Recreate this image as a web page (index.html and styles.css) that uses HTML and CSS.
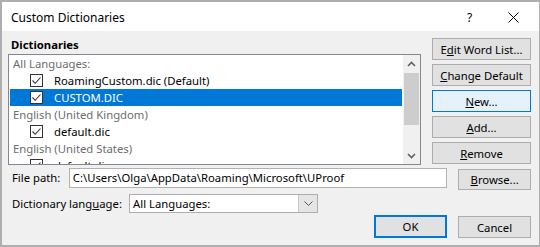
FILE: index.html
```html
<!DOCTYPE html>
<html lang="en">
<head>
    <meta charset="UTF-8">
    <title>Custom Dictionaries</title>
    <link rel="stylesheet" href="styles.css">
</head>
<body>
<div class="window">
    <div class="titlebar">
        <span class="title">Custom Dictionaries</span>
        <span class="help">?</span>
        <span class="close">
            <svg width="11" height="11" viewBox="0 0 11 11"><path d="M0.5 0.5 L10.5 10.5 M10.5 0.5 L0.5 10.5" stroke="#000" stroke-width="1" fill="none"/></svg>
        </span>
    </div>

    <div class="content">
        <div class="top">
            <div class="dicts">
                <div class="group-label">Dictionaries</div>
                <div class="listbox">
                    <div class="list">
                        <div class="row header">All Languages:</div>
                        <div class="row item">
                            <span class="check"><svg width="11" height="11" viewBox="0 0 11 11"><path d="M1.5 5.5 L4.2 8.3 L9.5 2.5" stroke="#333" stroke-width="1.1" fill="none"/></svg></span>
                            RoamingCustom.dic (Default)
                        </div>
                        <div class="row item selected">
                            <span class="check"><svg width="11" height="11" viewBox="0 0 11 11"><path d="M1.5 5.5 L4.2 8.3 L9.5 2.5" stroke="#333" stroke-width="1.1" fill="none"/></svg></span>
                            CUSTOM.DIC
                        </div>
                        <div class="row header">English (United Kingdom)</div>
                        <div class="row item">
                            <span class="check"><svg width="11" height="11" viewBox="0 0 11 11"><path d="M1.5 5.5 L4.2 8.3 L9.5 2.5" stroke="#333" stroke-width="1.1" fill="none"/></svg></span>
                            default.dic
                        </div>
                        <div class="row header">English (United States)</div>
                        <div class="row item">
                            <span class="check"><svg width="11" height="11" viewBox="0 0 11 11"><path d="M1.5 5.5 L4.2 8.3 L9.5 2.5" stroke="#333" stroke-width="1.1" fill="none"/></svg></span>
                            default.dic
                        </div>
                    </div>
                    <div class="scrollbar">
                        <span class="arrow">
                            <svg width="9" height="6" viewBox="0 0 9 6"><path d="M1 5 L4.5 1.5 L8 5" stroke="#606060" stroke-width="1.6" fill="none"/></svg>
                        </span>
                        <span class="track"><span class="thumb"></span></span>
                        <span class="arrow">
                            <svg width="9" height="6" viewBox="0 0 9 6"><path d="M1 1 L4.5 4.5 L8 1" stroke="#606060" stroke-width="1.6" fill="none"/></svg>
                        </span>
                    </div>
                </div>
            </div>

            <div class="side-buttons">
                <button class="btn">E<u>d</u>it Word List...</button>
                <button class="btn"><u>C</u>hange Default</button>
                <button class="btn focused"><u>N</u>ew...</button>
                <button class="btn"><u>A</u>dd...</button>
                <button class="btn"><u>R</u>emove</button>
            </div>
        </div>

        <div class="path-row">
            <span class="label">File path:</span>
            <div class="field">C:\Users\Olga\AppData\Roaming\Microsoft\UProof</div>
            <button class="btn browse"><u>B</u>rowse...</button>
        </div>

        <div class="lang-row">
            <span class="label">Dictionary lang<u>u</u>age:</span>
            <div class="combo">
                <span class="combo-text">All Languages:</span>
                <span class="combo-arrow">
                    <svg width="9" height="5" viewBox="0 0 9 5"><path d="M0.5 0.5 L4.5 4.5 L8.5 0.5" stroke="#555" stroke-width="1" fill="none"/></svg>
                </span>
            </div>
        </div>

        <div class="footer">
            <button class="btn ok">OK</button>
            <button class="btn cancel">Cancel</button>
        </div>
    </div>
</div>
</body>
</html>
```

FILE: styles.css
```css
body {
    margin: 0;
    font-family: "Noto Sans", sans-serif;
    font-size: 11.3px;
    color: #000;
    background: #f0f0f0;
}
.window {
    width: 540px;
    height: 247px;
    box-sizing: border-box;
    border-style: solid;
    border-color: #aeaeae;
    border-width: 2px 1px 2px 2px;
    background: #f0f0f0;
    display: flex;
    flex-direction: column;
}
.titlebar {
    height: 29px;
    background: #fff;
    display: flex;
    align-items: center;
    padding-left: 9px;
    padding-right: 3px;
    flex-shrink: 0;
}
.title {
    font-size: 12px;
    flex: 1;
    margin-top: 1px;
}
.help {
    font-size: 12px;
    width: 41px;
    text-align: center;
    margin-top: 1px;
}
.close {
    width: 46px;
    display: flex;
    justify-content: center;
    margin-top: 1px;
}
.content {
    padding: 6px 8px 0 6px;
    display: flex;
    flex-direction: column;
}
.top {
    display: flex;
    gap: 11px;
}
.dicts {
    width: 414px;
}
.group-label {
    font-weight: bold;
    height: 16px;
    line-height: 16px;
    padding-left: 3px;
    margin-bottom: 1px;
}
.listbox {
    height: 111px;
    box-sizing: border-box;
    border: 1px solid #828790;
    background: #fff;
    display: flex;
    overflow: hidden;
}
.list {
    flex: 1;
    overflow: hidden;
}
.row {
    height: 17px;
    line-height: 17px;
    margin: 0 1px;
    white-space: nowrap;
    display: flex;
    align-items: center;
}
.row.header {
    color: #6d6d6d;
    padding-left: 3px;
}
.row.item {
    padding-left: 20px;
}
.row.selected {
    background: #0078d7;
    color: #fff;
}
.check {
    width: 11px;
    height: 11px;
    border: 1px solid #333;
    background: #fff;
    margin-right: 11px;
    display: flex;
}
.scrollbar {
    width: 17px;
    background: #f0f0f0;
    display: flex;
    flex-direction: column;
    flex-shrink: 0;
}
.arrow {
    height: 17px;
    display: flex;
    align-items: center;
    justify-content: center;
}
.track {
    flex: 1;
    padding: 1px 1px 0 1px;
}
.thumb {
    display: block;
    height: 52px;
    background: #cdcdcd;
}
.side-buttons {
    display: flex;
    flex-direction: column;
    gap: 4px;
    margin-top: 1px;
}
.btn {
    width: 99px;
    height: 22px;
    box-sizing: border-box;
    border: 1px solid #adadad;
    background: #e1e1e1;
    font-family: inherit;
    font-size: inherit;
    color: #000;
    padding: 0;
}
.btn.focused {
    background: #e5f1fb;
    border-color: #0078d7;
}
.path-row {
    display: flex;
    align-items: flex-start;
    margin-top: 3px;
    height: 22px;
}
.label {
    padding-left: 4px;
    line-height: 20px;
}
.path-row .label {
    width: 57px;
}
.field {
    width: 380px;
    height: 20px;
    box-sizing: border-box;
    border: 1px solid #b2b2b2;
    background: #fff;
    line-height: 18px;
    padding-left: 3px;
    white-space: nowrap;
    overflow: hidden;
}
.btn.browse {
    width: 73px;
    height: 21px;
    margin-left: 11px;
    margin-top: 1px;
}
.lang-row {
    display: flex;
    align-items: center;
    margin-top: 4px;
    height: 19px;
}
.lang-row .label {
    width: 117px;
}
.combo {
    width: 189px;
    height: 19px;
    box-sizing: border-box;
    border: 1px solid #adadad;
    background: #fff;
    display: flex;
}
.combo-text {
    flex: 1;
    line-height: 17px;
    padding-left: 3px;
}
.combo-arrow {
    width: 18px;
    background: #e5e5e5;
    border-left: 1px solid #c8c8c8;
    display: flex;
    align-items: center;
    justify-content: center;
}
.footer {
    display: flex;
    justify-content: flex-end;
    gap: 11px;
    margin-top: 2px;
}
.btn.ok {
    width: 73px;
    height: 23px;
    border: 2px solid #0078d7;
}
.btn.cancel {
    width: 73px;
    height: 22px;
    margin-top: 1px;
}
```
